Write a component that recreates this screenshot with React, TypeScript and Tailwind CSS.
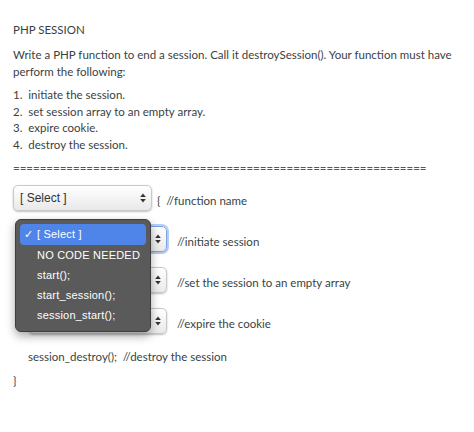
import React from 'react'

function Arrows() {
  return (
    <svg width="6" height="10" viewBox="0 0 6 10" className="shrink-0">
      <path d="M3 0.5 L5.8 4 L0.2 4 Z" fill="#333" />
      <path d="M3 9.5 L5.8 6 L0.2 6 Z" fill="#333" />
    </svg>
  )
}

function FakeSelect({ label, focused }: { label?: string; focused?: boolean }) {
  return (
    <div
      className={`w-[139px] h-[26px] rounded-[5px] border flex items-center justify-between pl-[6px] pr-[5px] bg-gradient-to-b from-white to-[#e9e9e9] shadow-[0_1px_2px_rgba(0,0,0,0.25)] shrink-0 ${
        focused ? 'border-[#7aa3e8] ring-2 ring-[#9bbcf0]/70' : 'border-[#c8c8c8]'
      }`}
    >
      <span className="text-[12px] text-[#333]" style={{ fontFamily: '"Liberation Sans", Arial, sans-serif' }}>
        {label}
      </span>
      <Arrows />
    </div>
  )
}

export default function App() {
  const items = ['NO CODE NEEDED', 'start();', 'start_session();', 'session_start();']
  return (
    <div
      className="w-[474px] h-[432px] bg-white text-[#3a3f44] text-[11.5px] px-[13px] pt-[21px] relative"
      style={{ fontFamily: 'Lato, "Open Sans", sans-serif' }}
    >
      <p className="leading-[18px]">PHP SESSION</p>
      <p className="mt-[7px] leading-[17px]">
        Write a PHP function to end a session. Call it destroySession(). Your function must have perform the following:
      </p>
      <ol className="mt-[7px] leading-[16.7px]">
        <li>1.&nbsp; initiate the session.</li>
        <li>2.&nbsp; set session array to an empty array.</li>
        <li>3.&nbsp; expire cookie.</li>
        <li>4.&nbsp; destroy the session.</li>
      </ol>
      <p className="mt-[6px] leading-[16px] text-[#555] whitespace-nowrap">{'='.repeat(62)}</p>
      <div className="mt-[9px] flex items-center gap-[5px]">
        <FakeSelect label="[ Select ]" />
        <span className="mt-[5px]">{'{'}&nbsp; //function name</span>
      </div>
      <div className="mt-[15px] pl-[15px] flex items-center gap-[10px]">
        <FakeSelect focused />
        <span className="mt-[5px]">//initiate session</span>
      </div>
      <div className="mt-[15px] pl-[15px] flex items-center gap-[10px]">
        <FakeSelect />
        <span className="mt-[5px]">//set the session to an empty array</span>
      </div>
      <div className="mt-[15px] pl-[15px] flex items-center gap-[10px]">
        <FakeSelect />
        <span className="mt-[5px]">//expire the cookie</span>
      </div>
      <p className="mt-[14px] pl-[15px] leading-[18px]">session_destroy();&nbsp; //destroy the session</p>
      <p className="mt-[6px] leading-[18px]">{'}'}</p>

      <div
        className="absolute left-[15px] top-[219px] w-[136px] rounded-[6px] bg-[#5a5a5a] border border-[#3e3e3e] shadow-[0_4px_10px_rgba(0,0,0,0.35)] px-[4px] pt-[4px] pb-[6px] text-white text-[11px] tracking-[0.2px]"
        style={{ fontFamily: '"Liberation Sans", Arial, sans-serif' }}
      >
        <div className="h-[21px] rounded-[4px] bg-[#4f85e8] flex items-center pl-[4px]">
          <span className="w-[13px]">✓</span>
          <span>[ Select ]</span>
        </div>
        {items.map((t) => (
          <div key={t} className="h-[20px] flex items-center pl-[17px] whitespace-nowrap">
            {t}
          </div>
        ))}
      </div>
    </div>
  )
}
